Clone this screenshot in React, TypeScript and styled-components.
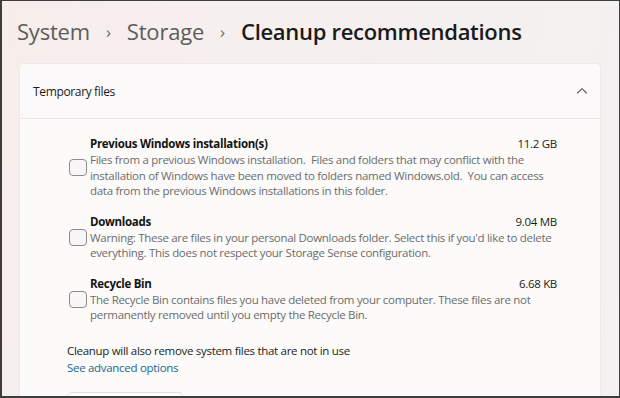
import styled, { createGlobalStyle } from 'styled-components';

const GlobalStyle = createGlobalStyle`
  html, body {
    margin: 0;
    padding: 0;
    background: #f6f0ef;
  }
  * {
    box-sizing: border-box;
  }
`;

const Frame = styled.div`
  width: 620px;
  height: 398px;
  overflow: hidden;
  border: 1px solid #3d3d3d;
  border-left-width: 2px;
  border-bottom-width: 2px;
  background: linear-gradient(100deg, #f7eeec 0%, #f5f0ef 55%, #f3f1f1 100%);
  font-family: 'Open Sans', 'Noto Sans', sans-serif;
  color: #1b1b1b;
`;

const Breadcrumb = styled.nav`
  display: flex;
  align-items: baseline;
  gap: 16px;
  padding: 15px 0 0 15px;
  height: 62px;
  font-size: 22px;
  line-height: 30px;
  letter-spacing: -0.2px;
`;

const Crumb = styled.span<{ $current?: boolean }>`
  color: ${(p) => (p.$current ? '#1a1a1a' : '#5d5d5d')};
  font-weight: ${(p) => (p.$current ? 600 : 400)};
  letter-spacing: ${(p) => (p.$current ? '-0.3px' : '-0.2px')};
`;

const Sep = styled.span`
  color: #6b6b6b;
  font-size: 17px;
  position: relative;
  top: -2px;
`;

const Card = styled.section`
  margin-left: 17px;
  width: 582px;
  background: #fcfbfa;
  border: 1px solid #efe8e7;
  border-bottom: none;
  border-radius: 5px 5px 0 0;
`;

const CardHeader = styled.div`
  display: flex;
  align-items: center;
  justify-content: space-between;
  height: 55px;
  padding: 0 12px 0 13px;
  background: #fbf9f9;
  border-bottom: 1px solid #f1e5e4;
  border-radius: 5px 5px 0 0;
`;

const HeaderTitle = styled.span`
  font-size: 12px;
  letter-spacing: -0.35px;
  color: #1b1b1b;
`;

const CardBody = styled.div`
  padding: 17px 43px 0 49px;
`;

const ItemList = styled.div`
  display: flex;
  flex-direction: column;
  gap: 15px;
`;

const Item = styled.div`
  display: flex;
  align-items: center;
  gap: 3px;
`;

const Check = styled.span`
  flex: none;
  width: 18px;
  height: 17px;
  border: 1px solid #8d8a8a;
  border-radius: 4px;
  background: #f8f6f6;
`;

const ItemText = styled.div`
  flex: 1;
  min-width: 0;
`;

const ItemHead = styled.div`
  display: flex;
  justify-content: space-between;
  align-items: baseline;
  font-size: 11.5px;
  line-height: 16px;
  letter-spacing: -0.3px;
`;

const ItemTitle = styled.span`
  font-weight: 700;
  color: #141414;
`;

const ItemSize = styled.span`
  color: #1b1b1b;
`;

const ItemDesc = styled.p`
  margin: 0;
  font-size: 11.5px;
  line-height: 15.5px;
  letter-spacing: -0.3px;
  color: #6b6b6b;
`;

const Footer = styled.div`
  padding: 19px 0 0 47px;
  font-size: 11.5px;
  line-height: 17px;
  letter-spacing: -0.3px;
`;

const Note = styled.div`
  color: #1b1b1b;
`;

const Link = styled.a`
  display: block;
  color: #22668c;
  text-decoration: none;
  cursor: pointer;
`;

const CleanButton = styled.button`
  display: block;
  margin: 16px 0 0 47px;
  width: 116px;
  height: 32px;
  background: #fdfdfd;
  border: 1px solid #e3e0e0;
  border-radius: 4px;
`;

const Chevron = () => (
  <svg width="12" height="8" viewBox="0 0 12 8" fill="none">
    <path d="M1.5 6 L6 1.7 L10.5 6" stroke="#5a5a5a" strokeWidth="1.1" strokeLinecap="round" strokeLinejoin="round" />
  </svg>
);

const items = [
  {
    title: 'Previous Windows installation(s)',
    size: '11.2 GB',
    desc: 'Files from a previous Windows installation.\u00a0 Files and folders that may conflict with the installation of Windows have been moved to folders named Windows.old.\u00a0 You can access data from the previous Windows installations in this folder.',
  },
  {
    title: 'Downloads',
    size: '9.04 MB',
    desc: "Warning: These are files in your personal Downloads folder. Select this if you'd like to delete everything. This does not respect your Storage Sense configuration.",
  },
  {
    title: 'Recycle Bin',
    size: '6.68 KB',
    desc: 'The Recycle Bin contains files you have deleted from your computer. These files are not permanently removed until you empty the Recycle Bin.',
  },
];

export default function App() {
  return (
    <>
      <GlobalStyle />
      <Frame>
        <Breadcrumb>
          <Crumb>System</Crumb>
          <Sep>›</Sep>
          <Crumb>Storage</Crumb>
          <Sep>›</Sep>
          <Crumb $current>Cleanup recommendations</Crumb>
        </Breadcrumb>
        <Card>
          <CardHeader>
            <HeaderTitle>Temporary files</HeaderTitle>
            <Chevron />
          </CardHeader>
          <CardBody>
            <ItemList>
              {items.map((it) => (
                <Item key={it.title}>
                  <Check role="checkbox" aria-checked="false" />
                  <ItemText>
                    <ItemHead>
                      <ItemTitle>{it.title}</ItemTitle>
                      <ItemSize>{it.size}</ItemSize>
                    </ItemHead>
                    <ItemDesc>{it.desc}</ItemDesc>
                  </ItemText>
                </Item>
              ))}
            </ItemList>
          </CardBody>
          <Footer>
            <Note>Cleanup will also remove system files that are not in use</Note>
            <Link>See advanced options</Link>
          </Footer>
          <CleanButton aria-label="Clean up" />
        </Card>
      </Frame>
    </>
  );
}
